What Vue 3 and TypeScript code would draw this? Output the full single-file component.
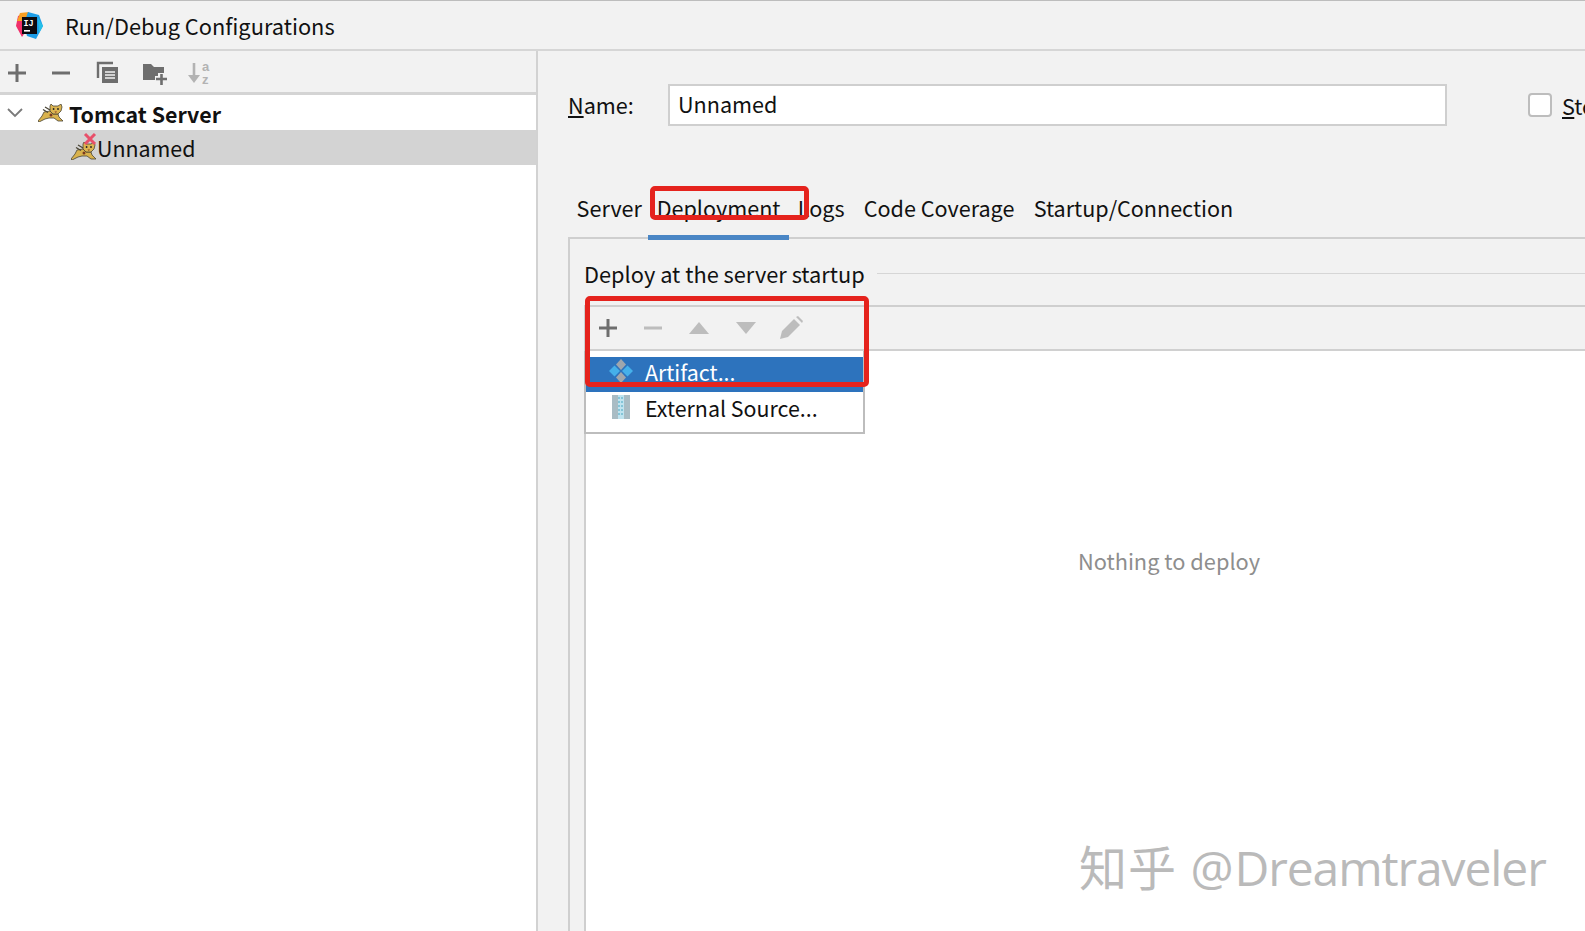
<script setup lang="ts">
const tabs: string[] = ['Server', 'Deployment', 'Logs', 'Code Coverage', 'Startup/Connection']
</script>

<template>
  <div class="window">
    <svg class="defs" width="0" height="0" aria-hidden="true">
      <symbol id="tomcat" viewBox="0 0 25 18">
        <path d="M6 8 L12 7 L15 10 L20 10 L21 13 L25 17 L20 17 L16 14 L11 14 L7 15 L1 18 L0 17 L4 12 Z" fill="#d9b24c" stroke="#4a4535" stroke-width="0.8" />
        <path d="M12 2 L13 0 L15 2 L20 2 L23 0 L24 3 L23 7 L20 10 L15 10 L12 7 Z" fill="#dcb551" stroke="#4a4535" stroke-width="0.8" />
        <circle cx="15.6" cy="5" r="0.9" fill="#222" />
        <circle cx="20" cy="5" r="0.9" fill="#222" />
        <path d="M16.5 7.5 L19 7.5 L17.8 9 Z" fill="#8a3c1f" />
        <path d="M5 5.5 L10 8.5 M7 3 L12 6" stroke="#4a4535" stroke-width="1.3" />
        <circle cx="13" cy="11" r="1.5" fill="#7a3a20" />
      </symbol>
    </svg>

    <header class="titlebar">
      <svg class="logo" width="28" height="29" viewBox="0 0 28 29">
        <path d="M3 5 L11 2 L11 20 L7 26 L1 15 Z" fill="#f0306a" />
        <path d="M5 2 L14 1 L10 10 L2 10 Z" fill="#f8a024" />
        <path d="M13 1 L24 4 L28 15 L21 28 L12 25 L9 12 Z" fill="#1d9ee8" />
        <path d="M23 7 L28 15 L24 22 Z" fill="#25c0e8" />
        <rect x="7" y="6" width="15" height="17" fill="#0b0b10" />
        <text x="8.5" y="14.5" class="logo-text">IJ</text>
        <rect x="9" y="19" width="6" height="1.6" fill="#fff" />
      </svg>
      <span class="title">Run/Debug Configurations</span>
    </header>

    <main class="body">
      <aside class="left">
        <div class="toolbar">
          <svg class="tool" width="20" height="20" viewBox="0 0 20 20"><path d="M1 10 H19 M10 1 V19" stroke="#6e6e6e" stroke-width="3" /></svg>
          <svg class="tool minus" width="20" height="20" viewBox="0 0 20 20"><path d="M1 10 H19" stroke="#6e6e6e" stroke-width="3" /></svg>
          <svg class="tool copy" width="24" height="24" viewBox="0 0 24 24">
            <path d="M2 17 V2 H17" fill="none" stroke="#6e6e6e" stroke-width="2.4" />
            <rect x="6" y="6" width="16" height="16" fill="#6e6e6e" />
            <path d="M9 11 H19 M9 14 H19 M9 17 H19" stroke="#f2f2f2" stroke-width="1.5" />
          </svg>
          <svg class="tool folder" width="26" height="24" viewBox="0 0 26 24">
            <path d="M1 3 H9 L12 6 H22 V19 H1 Z" fill="#6e6e6e" />
            <path d="M13 18 H25 M19 12 V24" stroke="#f2f2f2" stroke-width="6" />
            <path d="M14 18 H25 M19.5 13 V24" stroke="#6e6e6e" stroke-width="2.6" />
          </svg>
          <svg class="tool sort" width="26" height="26" viewBox="0 0 26 26">
            <path d="M7 3 V19" stroke="#b3b3b3" stroke-width="2.6" />
            <path d="M1 15 H13 L7 23 Z" fill="#b3b3b3" />
            <text x="15" y="11" class="sort-text">a</text>
            <text x="15" y="24" class="sort-text">z</text>
          </svg>
        </div>
        <div class="tree-row">
          <svg class="chevron" width="16" height="10" viewBox="0 0 16 10"><path d="M1 1 L8 8 L15 1" fill="none" stroke="#7a7a7a" stroke-width="1.8" /></svg>
          <svg class="cat" width="25" height="18"><use href="#tomcat" /></svg>
          <span class="tree-bold">Tomcat Server</span>
        </div>
        <div class="tree-row selected">
          <span class="cat-wrap">
            <svg width="25" height="18"><use href="#tomcat" /></svg>
            <svg class="cross" width="14" height="14" viewBox="0 0 14 14"><path d="M2 2 L12 12 M12 2 L2 12" stroke="#e8506a" stroke-width="3" /></svg>
          </span>
          <span class="tree-name">Unnamed</span>
        </div>
      </aside>

      <section class="right">
        <div class="name-row">
          <label class="name-label"><u>N</u>ame:</label>
          <div class="name-input">Unnamed</div>
          <span class="check"></span>
          <span class="store"><u>S</u>tore as project file</span>
        </div>

        <nav class="tabs">
          <span v-for="t in tabs" :key="t" class="tab" :class="{ active: t === 'Deployment' }">{{ t }}</span>
        </nav>

        <div class="panel">
          <div class="group-title">
            <span>Deploy at the server startup</span>
            <i class="rule"></i>
          </div>
          <div class="list-box">
            <div class="list-tools">
              <svg width="20" height="20" viewBox="0 0 20 20"><path d="M1 10 H19 M10 1 V19" stroke="#6e6e6e" stroke-width="3" /></svg>
              <svg width="20" height="20" viewBox="0 0 20 20"><path d="M1 10 H19" stroke="#bdbdbd" stroke-width="3" /></svg>
              <svg width="22" height="14" viewBox="0 0 22 14"><path d="M11 1 L21 13 H1 Z" fill="#bdbdbd" /></svg>
              <svg width="22" height="14" viewBox="0 0 22 14"><path d="M1 1 H21 L11 13 Z" fill="#bdbdbd" /></svg>
              <svg class="pencil" width="26" height="26" viewBox="0 0 26 26">
                <path d="M2 24 L4 16 L16 4 L22 10 L10 22 Z" fill="#bdbdbd" />
                <path d="M18 2 L20 1 L25 6 L24 8 Z" fill="#bdbdbd" />
              </svg>
            </div>
            <div class="list-body">
              <span class="empty">Nothing to deploy</span>
            </div>
            <div class="popup">
              <div class="popup-item on">
                <svg class="pop-icon" width="26" height="26" viewBox="0 0 26 26">
                  <path d="M13 1 L18 6.5 L13 12 L8 6.5 Z" fill="#9fa6ad" />
                  <path d="M6.5 7.5 L12 13 L6.5 18.5 L1 13 Z" fill="#45b0ea" />
                  <path d="M19.5 7.5 L25 13 L19.5 18.5 L14 13 Z" fill="#45b0ea" />
                  <path d="M13 14 L18 19.5 L13 25 L8 19.5 Z" fill="#9fa6ad" />
                </svg>
                <span>Artifact...</span>
              </div>
              <div class="popup-item">
                <svg class="pop-icon" width="26" height="26" viewBox="0 0 26 26">
                  <rect x="4" y="1" width="18" height="24" fill="#a9bcc4" />
                  <rect x="10" y="1" width="6" height="24" fill="#bfe3ef" />
                  <path d="M10 4 H16 M10 8 H16 M10 12 H16 M10 16 H16 M10 20 H16" stroke="#4aa7c2" stroke-width="1.2" stroke-dasharray="2 1" />
                </svg>
                <span>External Source...</span>
              </div>
            </div>
          </div>
        </div>
      </section>
    </main>

    <div class="mark mark-tab"></div>
    <div class="mark mark-list"></div>
    <div class="watermark">知乎 @<span class="wm-latin">Dreamtraveler</span></div>
  </div>
</template>

<style>
html, body { margin: 0; height: 100%; overflow: hidden; background: #f2f2f2; }
</style>

<style scoped>
.window {
  position: relative;
  width: 1585px;
  height: 931px;
  overflow: hidden;
  display: flex;
  flex-direction: column;
  background: #f2f2f2;
  color: #111;
  font-family: "Noto Sans CJK SC", "Noto Sans", sans-serif;
  font-size: 21.6px;
  border-top: 1px solid #bdbdbd;
  box-sizing: border-box;
}
.defs { position: absolute; }
.titlebar {
  flex: none;
  height: 50px;
  box-sizing: border-box;
  border-bottom: 2px solid #d6d6d6;
  display: flex;
  align-items: center;
  padding-left: 15px;
  gap: 22px;
}
.logo-text { font: 700 8.5px "Liberation Mono", monospace; fill: #fff; }
.title { font-size: 21.8px; line-height: 1; padding-top: 2px; }
.body { flex: 1; display: flex; min-height: 0; }
.left {
  flex: none;
  width: 538px;
  box-sizing: border-box;
  background: #fff;
  border-right: 2px solid #d2d2d2;
}
.toolbar {
  height: 44px;
  box-sizing: border-box;
  background: #f2f2f2;
  border-bottom: 3px solid #d4d4d4;
  display: flex;
  align-items: center;
  padding: 2px 0 0 7px;
}
.minus { margin-left: 24px; }
.copy { margin-left: 25px; }
.folder { margin-left: 22px; }
.sort { margin-left: 19px; }
.sort-text { font: 700 13px "Liberation Sans", sans-serif; fill: #b3b3b3; }
.tree-row {
  height: 35px;
  display: flex;
  align-items: center;
  padding-left: 7px;
}
.tree-row.selected { background: #d3d3d3; padding-left: 71px; }
.cat { margin-left: 15px; }
.tree-bold { font-weight: 700; margin-left: 6px; font-size: 21.4px; padding-top: 2px; }
.tree-name { font-size: 21.4px; }
.cat-wrap { position: relative; width: 26px; height: 18px; margin-top: -8px; }
.cross { position: absolute; top: -3px; left: 12px; }
.right { flex: 1; min-width: 0; padding-left: 30px; }
.name-row {
  height: 42px;
  margin-top: 33px;
  display: flex;
  align-items: center;
  white-space: nowrap;
  overflow: hidden;
}
.name-label { flex: none; width: 100px; padding-bottom: 2px; }
.name-input {
  width: 779px;
  height: 42px;
  flex: none;
  box-sizing: border-box;
  background: #fff;
  border: 2px solid #cfcfcf;
  padding-left: 8px;
  line-height: 36px;
}
.check {
  flex: none;
  width: 24px;
  height: 24px;
  box-sizing: border-box;
  margin-left: 81px;
  background: #fff;
  border: 2px solid #bdbdbd;
  border-radius: 4px;
}
.store { margin-left: 10px; flex: none; }
.tabs {
  display: flex;
  margin-top: 59px;
  height: 52px;
}
.tab { padding: 0 8.6px; line-height: 46px; }
.tab.active { box-shadow: inset 0 -5px 0 #4a86c5; height: 55px; margin-left: -2.5px; }
.tab:nth-child(3), .tab:nth-child(4) { margin-right: 2px; }
.panel {
  border-left: 2px solid #cfcfcf;
  border-top: 2px solid #cfcfcf;
  height: 700px;
  padding: 16px 0 0 14px;
}
.group-title {
  display: flex;
  align-items: center;
  height: 44px;
  gap: 12px;
  padding-bottom: 8px;
  box-sizing: border-box;
  font-size: 21.8px;
}
.rule { flex: 1; height: 1px; background: #d6d6d6; }
.list-box {
  position: relative;
  width: 1166px;
  height: 650px;
  border-left: 2px solid #cfcfcf;
  border-top: 2px solid #cfcfcf;
  background: #fff;
  margin-top: 6px;
}
.list-tools {
  height: 42px;
  background: #f2f2f2;
  border-bottom: 2px solid #d0d0d0;
  display: flex;
  align-items: center;
  gap: 25px;
  padding-left: 12px;
}
.pencil { margin-left: -4px; }
.list-body {
  height: 418px;
  display: flex;
  align-items: center;
  justify-content: center;
}
.empty { color: #8e8e8e; font-size: 21.8px; }
.popup {
  position: absolute;
  left: -2px;
  top: 44px;
  width: 281px;
  box-sizing: border-box;
  background: #fff;
  border: 2px solid #bdbdbd;
  border-top: none;
  padding-top: 6px;
  font-size: 21.4px;
}
.popup-item {
  display: flex;
  align-items: center;
  height: 35px;
  box-sizing: border-box;
  padding: 0 0 7px 22px;
  gap: 11px;
}
.popup-item + .popup-item { height: 40px; padding-bottom: 10px; }
.popup-item.on { background: #2d73bd; color: #fff; }
.pop-icon { flex: none; }
.mark {
  position: absolute;
  box-sizing: border-box;
  border: 5px solid #e5231d;
  border-radius: 5px;
}
.mark-tab { left: 650px; top: 185px; width: 159px; height: 34px; }
.mark-list { left: 585px; top: 295px; width: 284px; height: 91px; }
.watermark {
  position: absolute;
  left: 1079px;
  top: 834px;
  font-size: 48px;
  line-height: 66px;
  letter-spacing: 1px;
  color: #bababa;
  white-space: nowrap;
  font-family: "Open Sans", "Noto Sans CJK SC", sans-serif;
}
.wm-latin { letter-spacing: -1.1px; }
</style>
